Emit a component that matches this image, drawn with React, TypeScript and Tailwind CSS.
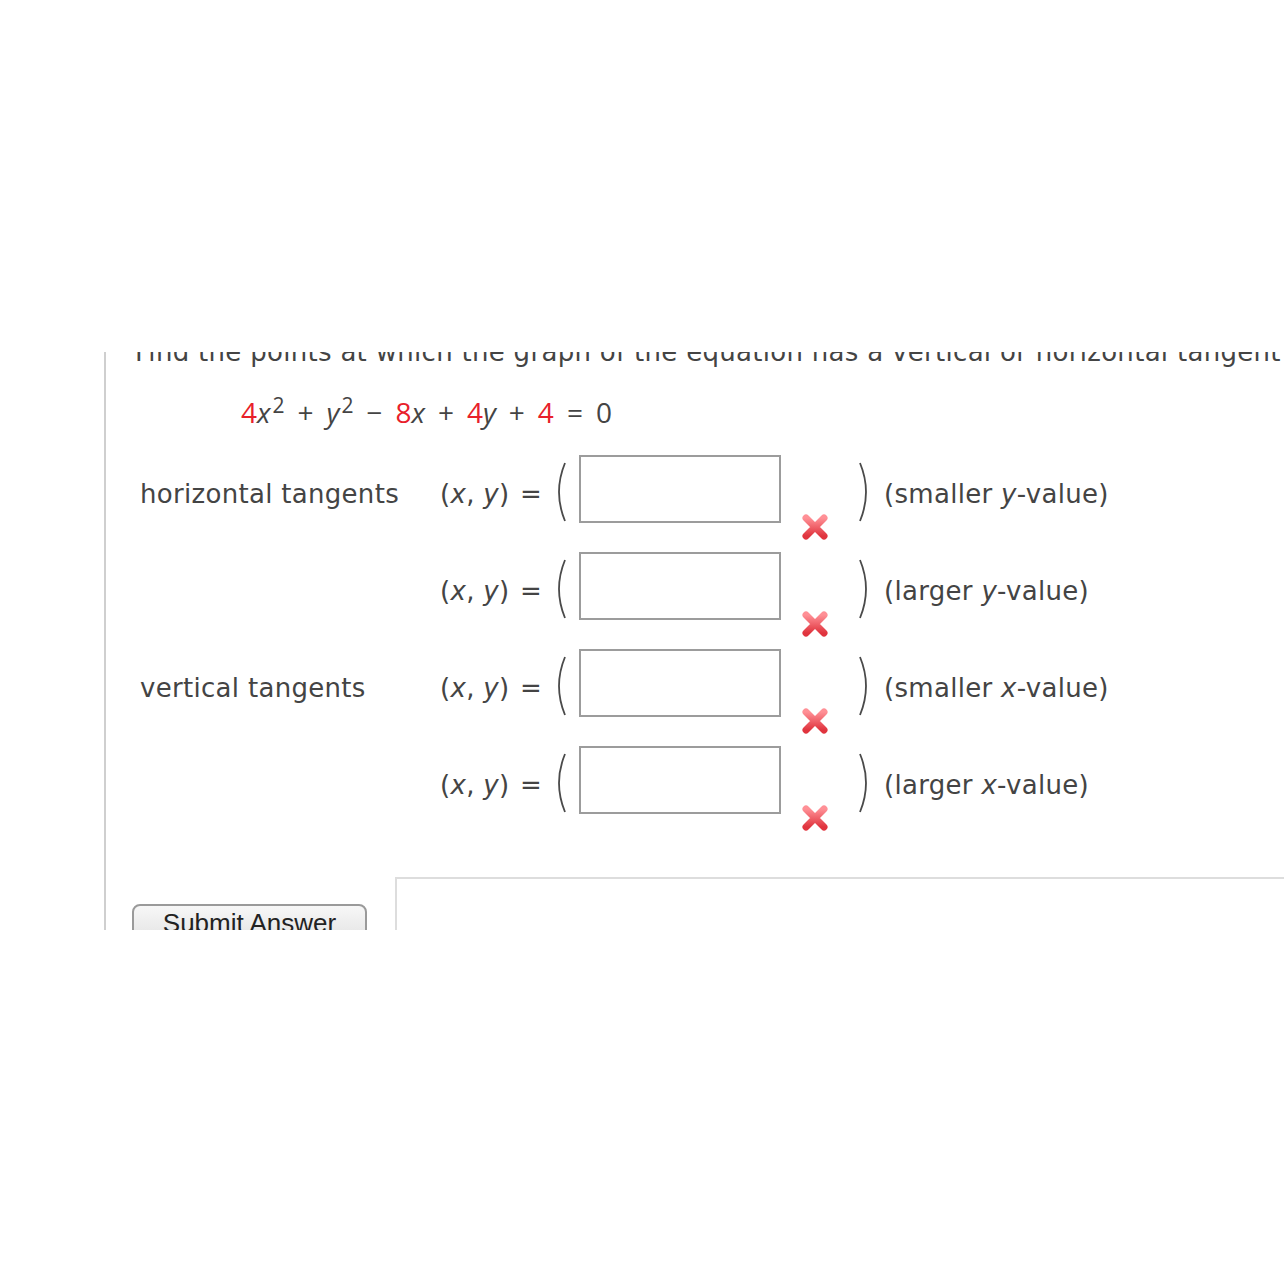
import type { ReactNode } from "react";

type Row = { label: string; hint: ReactNode };

const rows: Row[] = [
  { label: "horizontal tangents", hint: <>(smaller <i>y</i>-value)</> },
  { label: "", hint: <>(larger <i>y</i>-value)</> },
  { label: "vertical tangents", hint: <>(smaller <i>x</i>-value)</> },
  { label: "", hint: <>(larger <i>x</i>-value)</> },
];

function Paren({ right }: { right?: boolean }) {
  return (
    <svg width="14" height="60" viewBox="0 0 14 60" className="mt-[7px] shrink-0">
      <path
        d={right ? "M2 1 Q14 30 2 59" : "M12 1 Q0 30 12 59"}
        fill="none"
        stroke="#4a4a4a"
        strokeWidth="1.8"
      />
    </svg>
  );
}

function WrongMark() {
  return (
    <svg width="26" height="26" viewBox="0 0 26 26" className="mt-[59px] shrink-0">
      <defs>
        <linearGradient id="xg" x1="0" y1="0" x2="0" y2="1">
          <stop offset="0" stopColor="#ff9096" />
          <stop offset="1" stopColor="#e0343e" />
        </linearGradient>
      </defs>
      <path d="M4 4 L22 22 M22 4 L4 22" stroke="url(#xg)" strokeWidth="7" strokeLinecap="round" />
    </svg>
  );
}

function AnswerRow({ row }: { row: Row }) {
  return (
    <div className="flex h-[68px] items-start">
      <div className="w-[300px] shrink-0 pt-[21px] leading-[36px]">{row.label}</div>
      <div className="w-[113px] shrink-0 whitespace-nowrap pt-[21px] leading-[36px]">
        (<i>x</i>, <i>y</i>){" "}
        <span className="ml-[2px]">=</span>
      </div>
      <Paren />
      <input
        type="text"
        className="ml-[12px] h-[68px] w-[202px] shrink-0 border-2 border-[#9c9c9c] bg-white outline-none"
      />
      <div className="ml-[21px]">
        <WrongMark />
      </div>
      <div className="ml-[30px]">
        <Paren right />
      </div>
      <div className="ml-[12px] whitespace-nowrap pt-[21px] leading-[36px]">{row.hint}</div>
    </div>
  );
}

export default function App() {
  return (
    <div className="min-h-[1284px] w-[1284px] overflow-hidden bg-white pt-[352px]">
      <div className="ml-[104px] h-[578px] overflow-hidden border-l-2 border-[#cfcfcf] font-['DejaVu_Sans',sans-serif] text-[26px] tracking-[0.3px] text-[#444]">
        <p className="mt-[-18px] whitespace-nowrap pl-[29px] leading-[36px]">
          Find the points at which the graph of the equation has a vertical or horizontal tangent line.
        </p>

        <p className="mt-[24px] whitespace-nowrap pl-[135px] font-['Open_Sans',sans-serif] text-[28px] leading-[36px] tracking-normal">
          <span className="text-[#e8202a]">4</span>
          <i>x</i>
          <sup className="ml-[2px] text-[21px]">2</sup>
          <span className="mx-[13px]">+</span>
          <i>y</i>
          <sup className="ml-[2px] text-[21px]">2</sup>
          <span className="mx-[13px]">−</span>
          <span className="text-[#e8202a]">8</span>
          <i>x</i>
          <span className="mx-[13px]">+</span>
          <span className="text-[#e8202a]">4</span>
          <i>y</i>
          <span className="mx-[13px]">+</span>
          <span className="text-[#e8202a]">4</span>
          <span className="mx-[13px]">=</span>
          <span>0</span>
        </p>

        <div className="mt-[25px] flex flex-col gap-[29px] pl-[34px]">
          {rows.map((row, i) => (
            <AnswerRow key={i} row={row} />
          ))}
        </div>

        <div className="mt-[63px] flex items-start">
          <button className="ml-[26px] mt-[27px] flex h-[48px] w-[235px] shrink-0 items-start justify-center rounded-[8px] border-2 border-[#9a9a9a] bg-gradient-to-b from-[#f7f7f7] to-[#dedede] pt-[2px] font-['Liberation_Sans',sans-serif] text-[26px] leading-[30px] tracking-normal text-[#222]">
            Submit Answer
          </button>
          <div className="ml-[28px] h-[200px] flex-1 border-l-2 border-t-2 border-[#dddddd]" />
        </div>
      </div>
    </div>
  );
}
